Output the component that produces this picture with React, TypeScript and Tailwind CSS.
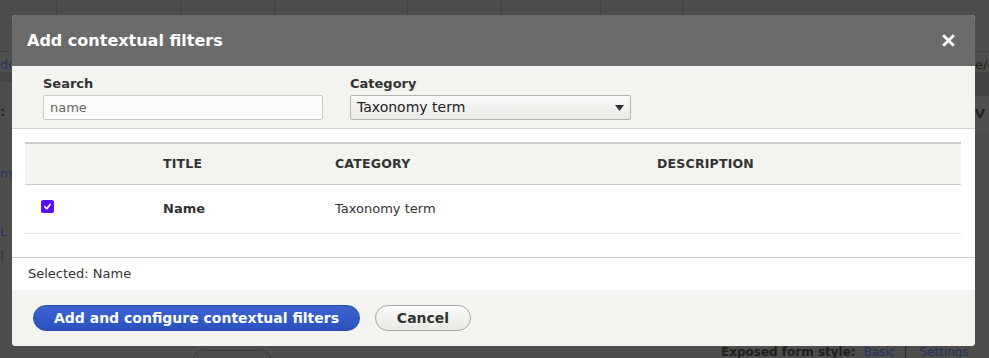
import React from "react";

const font = { fontFamily: '"DejaVu Sans", "Liberation Sans", sans-serif' };

function Toolbar() {
  // dimmed admin toolbar behind the dialog
  const tabs = [57, 124, 94, 133, 94, 99, 82];
  return (
    <div className="flex h-[52px] bg-[#4d4d4d] border-b border-[#444]">
      {tabs.map((w, i) => (
        <div key={i} style={{ width: w }} className="h-full border-r border-[#424242]" />
      ))}
    </div>
  );
}

function Background() {
  return (
    <div className="h-full flex flex-col bg-[#4d4d4b] text-[13px]">
      <Toolbar />
      <div className="flex-1 flex justify-between">
        <div className="w-[12px] flex flex-col text-[#2b3565]">
          <div className="h-[20px] bg-[#4f4f4d] pt-[3px] whitespace-nowrap">dd</div>
          <div className="h-[10px] bg-[#454544]" />
          <div className="h-[60px] bg-[#4d4d4b] text-[#222] pt-[20px] font-bold">:</div>
          <div className="h-[60px] pt-[22px] whitespace-nowrap">m</div>
          <div className="h-[40px] pt-[20px] whitespace-nowrap">L</div>
          <div className="h-[30px] pt-[4px] text-[#333]">|</div>
        </div>
        <div className="w-[14px] flex flex-col">
          <div className="h-[20px] text-[#222] pt-[3px] whitespace-nowrap overflow-hidden">e/d</div>
          <div className="h-[24px] bg-[#444442]" />
          <div className="h-[36px] bg-[#4f4f4d] text-[#222] font-bold pt-[8px]">V</div>
        </div>
      </div>
      <div className="h-[14px] relative">
        <div className="absolute left-[193px] top-[6px] w-[78px] h-[20px] rounded-[10px] border border-[#3a3a3a]" />
        <div className="flex items-end pl-[721px] pt-[1px] text-[12px] leading-[14px] whitespace-nowrap">
          <span className="font-bold text-[#1e1e1e]">Exposed form style:</span>
          <span className="ml-[8px] text-[#27325f]">Basic</span>
          <span className="ml-[8px] text-[#222]">|</span>
          <span className="ml-[12px] text-[#27325f]">Settings</span>
        </div>
      </div>
    </div>
  );
}

function Check() {
  return (
    <span className="flex h-[13px] w-[13px] items-center justify-center rounded-[2px] bg-[#5a0ff0]">
      <svg width="9" height="9" viewBox="0 0 10 10" fill="none">
        <path d="M2 5.2 4.2 7.4 8.2 2.6" stroke="white" strokeWidth="1.8" strokeLinecap="round" strokeLinejoin="round" />
      </svg>
    </span>
  );
}

export default function App() {
  return (
    <div style={font} className="relative w-[989px] h-[358px] overflow-hidden">
      <Background />

      {/* dialog */}
      <div className="absolute left-[12px] top-[15px] w-[963px] h-[331px] flex flex-col overflow-hidden rounded-[4px] bg-white">
        <div className="h-[51px] shrink-0 flex items-center justify-between bg-[#6b6b6b] pl-[15px] pr-[20px]">
          <h2 className="text-[16px] font-bold text-white">Add contextual filters</h2>
          <svg width="13" height="13" viewBox="0 0 12 12">
            <path d="M2 2 10 10 M10 2 2 10" stroke="white" strokeWidth="2.6" strokeLinecap="square" />
          </svg>
        </div>

        <div className="h-[63px] shrink-0 flex gap-[27px] bg-[#f3f4ef] border-b border-[#cfcfcf] pl-[31px] pt-[9px]">
          <div className="flex flex-col gap-[2px]">
            <label className="text-[13px] leading-[18px] font-bold text-[#333]">Search</label>
            <div className="w-[280px] h-[25px] border border-[#c8c8c8] rounded-[2px] bg-[#fbfbf9] flex items-center pl-[6px] text-[13px] text-[#666]">
              name
            </div>
          </div>
          <div className="flex flex-col gap-[2px]">
            <label className="text-[13px] leading-[18px] font-bold text-[#333]">Category</label>
            <div className="w-[281px] h-[25px] border border-[#b4b4b4] rounded-[2px] bg-gradient-to-b from-[#fafaf8] to-[#e9e9e6] flex items-center justify-between pl-[6px] pr-[6px] text-[14px] text-[#222]">
              <span>Taxonomy term</span>
              <svg width="9" height="6" viewBox="0 0 9 6">
                <path d="M0 0h9L4.5 6z" fill="#333" />
              </svg>
            </div>
          </div>
        </div>

        <div className="h-[128px] shrink-0 px-[13px] pt-[13px] pr-[14px]">
          <div className="border-t-2 border-[#cccccc]">
            <div className="h-[41px] grid grid-cols-[138px_172px_322px_1fr] items-center bg-[#f3f4ef] border-b border-[#cccccc] text-[12.5px] font-bold text-[#333] tracking-[0.2px]">
              <span />
              <span>TITLE</span>
              <span>CATEGORY</span>
              <span>DESCRIPTION</span>
            </div>
            <div className="h-[49px] grid grid-cols-[138px_172px_322px_1fr] items-center border-b border-[#e3e3e3] text-[13px] text-[#333]">
              <span className="pl-[16px] -mt-[6px]">
                <Check />
              </span>
              <span className="font-bold">Name</span>
              <span>Taxonomy term</span>
              <span />
            </div>
          </div>
        </div>

        <div className="h-[33px] shrink-0 border-t border-[#cccccc] flex items-center pl-[16px] text-[13px] text-[#333]">
          Selected: Name
        </div>

        <div className="flex-1 bg-[#f3f4ef] flex gap-[15px] pl-[21px] pt-[15px]">
          <button className="w-[327px] h-[26px] rounded-full bg-gradient-to-b from-[#3d63d0] to-[#2a52be] border border-[#2a4aa8] text-[14px] font-bold text-white">
            Add and configure contextual filters
          </button>
          <button className="w-[96px] h-[26px] rounded-full bg-gradient-to-b from-[#fbfbf9] to-[#e8e8e5] border border-[#a8a8a8] text-[14px] font-bold text-[#333]">
            Cancel
          </button>
        </div>
      </div>
    </div>
  );
}
